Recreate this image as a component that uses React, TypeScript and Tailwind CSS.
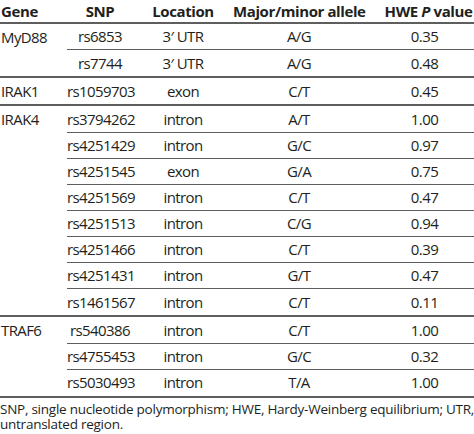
import React from "react";

type Row = { snp: string; loc: string; allele: string; p: string };
type Group = { gene: string; rows: Row[] };

const groups: Group[] = [
  {
    gene: "MyD88",
    rows: [
      { snp: "rs6853", loc: "3\u2032 UTR", allele: "A/G", p: "0.35" },
      { snp: "rs7744", loc: "3\u2032 UTR", allele: "A/G", p: "0.48" },
    ],
  },
  {
    gene: "IRAK1",
    rows: [{ snp: "rs1059703", loc: "exon", allele: "C/T", p: "0.45" }],
  },
  {
    gene: "IRAK4",
    rows: [
      { snp: "rs3794262", loc: "intron", allele: "A/T", p: "1.00" },
      { snp: "rs4251429", loc: "intron", allele: "G/C", p: "0.97" },
      { snp: "rs4251545", loc: "exon", allele: "G/A", p: "0.75" },
      { snp: "rs4251569", loc: "intron", allele: "C/T", p: "0.47" },
      { snp: "rs4251513", loc: "intron", allele: "C/G", p: "0.94" },
      { snp: "rs4251466", loc: "intron", allele: "C/T", p: "0.39" },
      { snp: "rs4251431", loc: "intron", allele: "G/T", p: "0.47" },
      { snp: "rs1461567", loc: "intron", allele: "C/T", p: "0.11" },
    ],
  },
  {
    gene: "TRAF6",
    rows: [
      { snp: "rs540386", loc: "intron", allele: "C/T", p: "1.00" },
      { snp: "rs4755453", loc: "intron", allele: "G/C", p: "0.32" },
      { snp: "rs5030493", loc: "intron", allele: "T/A", p: "1.00" },
    ],
  },
];

export default function App() {
  return (
    <div
      className="w-[474px] h-[434px] overflow-hidden bg-white text-[#231f20]"
      style={{ fontFamily: '"Open Sans", "Noto Sans", sans-serif' }}
    >
      {/* header */}
      <div className="flex h-[24px] items-center border-b-2 border-[#5e5e5e] text-[15px] font-bold tracking-[-0.4px]">
        <div className="w-[67px] pl-[1px]">Gene</div>
        <div className="w-[66px] text-center">SNP</div>
        <div className="w-[100px] text-center">Location</div>
        <div className="w-[132px] text-center whitespace-nowrap">Major/minor allele</div>
        <div className="w-[109px] pl-[18px] text-center whitespace-nowrap">
          HWE <span className="italic">P</span> value
        </div>
      </div>

      {groups.map((g) => (
        <div key={g.gene} className="flex border-b-2 border-[#5e5e5e] text-[15px] tracking-[-0.6px]">
          <div className="w-[67px] h-[26.14px] flex items-center pl-[1px]">{g.gene}</div>
          <div className="flex-1 flex flex-col">
            {g.rows.map((r, i) => (
              <div
                key={r.snp}
                className={
                  "flex h-[26.14px] items-center " +
                  (i < g.rows.length - 1 ? "border-b-[1.5px] border-[#5e5e5e]" : "")
                }
              >
                <div className="w-[66px] text-center whitespace-nowrap">{r.snp}</div>
                <div className="w-[100px] text-center">{r.loc}</div>
                <div className="w-[132px] text-center">{r.allele}</div>
                <div className="w-[109px] pl-[10px] text-center">{r.p}</div>
              </div>
            ))}
          </div>
        </div>
      ))}

      <p className="pt-[4px] text-[13.5px] leading-[15px] tracking-[-0.25px] whitespace-nowrap">
        SNP, single nucleotide polymorphism; HWE, Hardy-Weinberg equilibrium; UTR,
        <br />
        untranslated region.
      </p>
    </div>
  );
}
